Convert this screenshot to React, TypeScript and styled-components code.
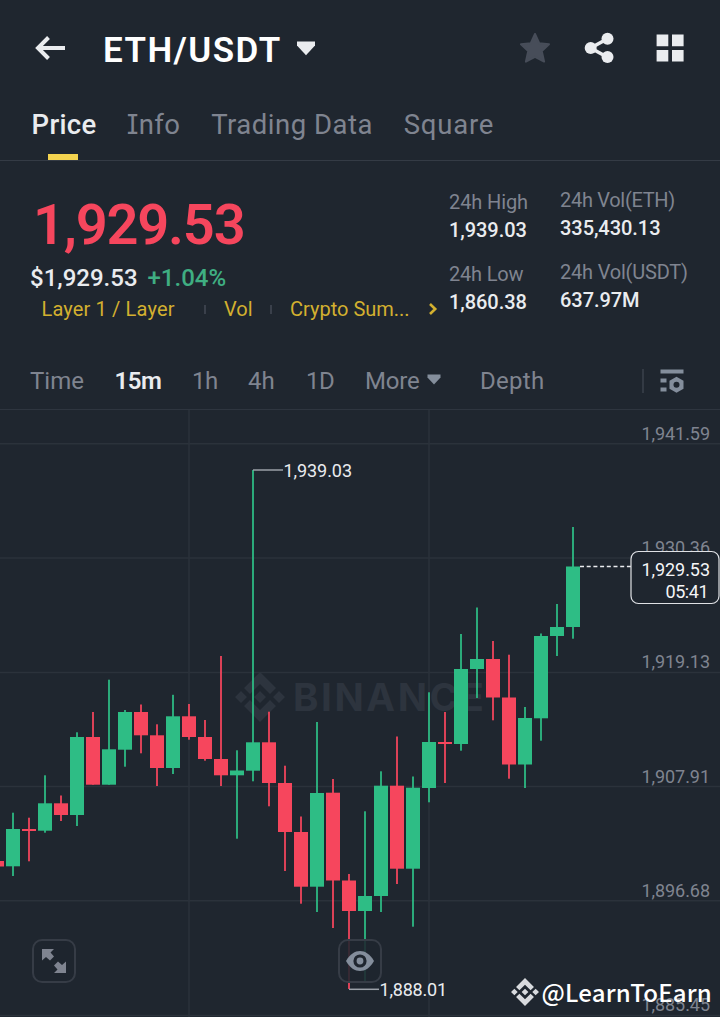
import React from "react";
import styled, { createGlobalStyle } from "styled-components";

const c = {
  bg: "#1f262f",
  line: "#2e353f",
  grid: "#2b323b",
  text: "#eaecef",
  muted: "#848e9c",
  dim: "#7f8490",
  up: "#2ebd85",
  down: "#f6465d",
  gold: "#d3b02f",
};

const Global = createGlobalStyle`
  * { box-sizing: border-box; }
  body { margin: 0; background: ${c.bg}; font-family: Roboto, "Liberation Sans", sans-serif; color: ${c.text}; }
`;

const Screen = styled.main`
  width: 720px;
  height: 1017px;
  overflow: hidden;
  display: flex;
  flex-direction: column;
  background: ${c.bg};
  white-space: nowrap;
`;

const Header = styled.header`
  height: 96px;
  flex: none;
  display: flex;
  align-items: center;
  padding: 0 34px 0 34px;
`;

const Title = styled.h1`
  margin: 0 0 0 37px;
  padding-top: 5px;
  width: 179px;
  font-size: 35px;
  line-height: 40px;
  font-weight: 600;
  letter-spacing: 1.4px;
  color: #fff;
`;

const HeaderCaret = styled.svg`
  margin-left: 14px;
`;

const Actions = styled.div`
  margin-left: auto;
  display: flex;
  align-items: center;
  gap: 34px;
`;

const Tabs = styled.nav`
  height: 65px;
  flex: none;
  display: flex;
  padding-left: 31px;
  gap: 30px;
  border-bottom: 1px solid #343b45;
`;

const Tab = styled.div<{ $active?: boolean; $w: number; $ls: number }>`
  width: ${(p) => p.$w}px;
  height: 64px;
  display: flex;
  flex-direction: column;
  align-items: center;
  justify-content: space-between;
  padding-top: 12px;
  font-size: 27.5px;
  line-height: 33px;
  text-indent: 2px;
  font-weight: ${(p) => (p.$active ? 500 : 400)};
  letter-spacing: ${(p) => p.$ls}px;
  color: ${(p) => (p.$active ? c.text : c.dim)};
  &::after {
    content: "";
    width: 30px;
    height: 6px;
    background: ${(p) => (p.$active ? "#f3d34f" : "transparent")};
  }
`;

const SlabI = styled.span`
  font-family: Inter, sans-serif;
  font-size: 26.5px;
  font-feature-settings: "cv08";
`;

const Summary = styled.section`
  height: 191px;
  flex: none;
  display: flex;
  padding-left: 30px;
`;

const PriceColumn = styled.div`
  width: 419px;
  padding-top: 35px;
`;

const Price = styled.div`
  padding-left: 3px;
  font-size: 56px;
  line-height: 58px;
  font-weight: 600;
  letter-spacing: -1.2px;
  color: ${c.down};
`;

const SubPrice = styled.div`
  display: flex;
  gap: 10px;
  margin-top: 10px;
  font-size: 24px;
  line-height: 28px;
  font-weight: 500;
`;

const Change = styled.span`
  color: #3fae82;
`;

const Tags = styled.div`
  display: flex;
  align-items: center;
  height: 34px;
  padding-left: 11.5px;
  font-size: 20px;
  color: ${c.gold};
`;

const Tag = styled.span<{ $w: number; $ls?: number }>`
  width: ${(p) => p.$w}px;
  letter-spacing: ${(p) => p.$ls ?? 0}px;
`;

const TagRule = styled.i<{ $l: number; $r: number }>`
  width: 2px;
  height: 9px;
  margin: 0 ${(p) => p.$r}px 0 ${(p) => p.$l}px;
  background: #3a404b;
`;

const TagArrow = styled.svg`
  margin-left: 17px;
`;

const StatColumn = styled.dl<{ $top: number; $w: number; $gap: number }>`
  width: ${(p) => p.$w}px;
  margin: 0;
  padding-top: ${(p) => p.$top}px;
  display: flex;
  flex-direction: column;
  gap: ${(p) => p.$gap}px;
`;

const Stat = styled.div`
  font-size: 20px;
  line-height: 28px;
`;

const StatLabel = styled.dt<{ $ls?: number }>`
  color: ${c.dim};
  letter-spacing: ${(p) => p.$ls ?? 0}px;
`;

const StatValue = styled.dd`
  margin: 0;
  font-weight: 500;
  letter-spacing: -0.05px;
  color: ${c.text};
`;

const Intervals = styled.nav`
  height: 58px;
  flex: none;
  display: flex;
  align-items: center;
  padding-left: 30px;
  border-bottom: 1px solid ${c.line};
`;

const Interval = styled.span<{ $w: number; $ls?: number; $active?: boolean }>`
  width: ${(p) => p.$w}px;
  font-size: 24px;
  line-height: 30px;
  letter-spacing: ${(p) => p.$ls ?? 0}px;
  font-weight: ${(p) => (p.$active ? 600 : 400)};
  color: ${(p) => (p.$active ? c.text : c.dim)};
`;

const SmallCaret = styled.svg`
  margin: -3px 39px 0 0;
`;

const Divider = styled.i`
  width: 2px;
  height: 24px;
  margin-right: 16px;
  background: #333a44;
`;

const ChartArea = styled.section`
  position: relative;
  height: 607px;
  flex: none;
`;

const ChartSvg = styled.svg`
  display: block;
`;

const ChartButton = styled.button<{ $x: number }>`
  position: absolute;
  left: ${(p) => p.$x}px;
  top: 529px;
  width: 44px;
  height: 44px;
  padding: 0;
  display: flex;
  align-items: center;
  justify-content: center;
  border: 2px solid #363c46;
  border-radius: 10px;
  background: rgba(31, 38, 47, 0.88);
`;

const Author = styled.div`
  position: absolute;
  right: 8px;
  top: 566px;
  display: flex;
  align-items: center;
  gap: 3px;
  font-family: "Noto Sans CJK SC", "Noto Sans", sans-serif;
  font-weight: 500;
  font-size: 24px;
  line-height: 32px;
  letter-spacing: 0.2px;
  color: #fff;
`;

type Candle = [x: number, top: number, bottom: number, high: number, low: number, up: 0 | 1];

const candles: Candle[] = [
  [-3, 861, 866.5, 861, 866.5, 0],
  [13, 829, 866.3, 812.7, 876, 1],
  [29, 829, 831, 817.7, 861.3, 0],
  [45, 803.3, 830.7, 775.3, 832.7, 1],
  [61, 803.3, 815, 795.5, 821, 0],
  [77, 737, 815, 732.3, 826, 1],
  [93, 737, 784.7, 712, 784.7, 0],
  [109, 749.3, 784.7, 679.7, 784.7, 1],
  [125, 712, 749.7, 710, 766.7, 1],
  [141, 712, 735.3, 704.5, 753.3, 0],
  [157, 735.3, 768, 724.3, 786, 0],
  [173, 716.3, 768, 694.8, 774, 1],
  [189, 716.3, 737, 704, 739.7, 0],
  [205, 737, 759, 720, 760.7, 0],
  [221, 759, 775.3, 656, 786, 0],
  [237, 770.5, 775.3, 750.3, 838.7, 1],
  [253, 742.3, 770.7, 470, 781.3, 1],
  [269, 742.3, 783, 711.7, 806.3, 0],
  [285, 783, 832, 765.7, 871, 0],
  [301, 832, 886.7, 816.5, 903.7, 0],
  [317, 793, 886.7, 722, 912, 1],
  [333, 792.7, 880.5, 779, 928, 0],
  [349, 880.5, 911, 874, 989, 0],
  [365, 896, 911, 811.3, 981, 1],
  [381, 785.7, 896, 771.3, 912, 1],
  [397, 785.7, 868.7, 736.5, 884, 0],
  [413, 787.7, 868.7, 776.5, 926.7, 1],
  [429, 742, 788, 692.3, 802.3, 1],
  [445, 742, 744, 712, 783, 0],
  [461, 669, 744, 634, 750.7, 1],
  [477, 659, 669, 607.5, 698, 1],
  [493, 659, 697.5, 641, 720.3, 0],
  [509, 697.5, 764.5, 654.7, 778.7, 0],
  [525, 718, 764.5, 707, 788, 1],
  [541, 636, 718.3, 633.5, 740.7, 1],
  [557, 627, 636, 604, 656, 1],
  [573, 566.5, 627, 527, 638.7, 1],
];

const gridY = [443.7, 558, 672.4, 786.6, 900.8, 1015.5];
const axis: [string, number][] = [
  ["1,941.59", 440],
  ["1,930.36", 553.5],
  ["1,919.13", 668],
  ["1,907.91", 782.7],
  ["1,896.68", 897],
  ["1,885.45", 1011],
];

/* Diamond brand mark in a 50 unit square */
const brandPath =
  "M25 0 L41 16 L35 22 L25 12 L15 22 L9 16 Z M25 50 L41 34 L35 28 L25 38 L15 28 L9 34 Z M0 25 L6 19 L12 25 L6 31 Z M38 25 L44 19 L50 25 L44 31 Z M19 25 L25 19 L31 25 L25 31 Z";

function Chart() {
  return (
    <ChartSvg width="720" height="607" viewBox="0 410 720 607" fontFamily="Roboto, sans-serif" fontSize="18">
      <g stroke={c.grid} strokeWidth="1.5">
        {gridY.map((y) => (
          <line key={y} x1="0" x2="720" y1={y} y2={y} />
        ))}
        <line x1="189" x2="189" y1="410" y2="1017" />
        <line x1="429" x2="429" y1="410" y2="1017" />
      </g>
      <g fill="#2d343e">
        <path d={brandPath} transform="translate(235 672)" />
        <text x="293" y="711" fontFamily="Inter, sans-serif" fontWeight="700" fontSize="38.5" textLength="191">
          BINANCE
        </text>
      </g>
      {candles.map(([x, top, bottom, high, low, up]) => (
        <g key={x} fill={up ? c.up : c.down}>
          <rect x={x - 1} y={high} width="2" height={low - high} opacity="0.88" />
          <rect x={x - 7} y={top} width="14" height={bottom - top} />
        </g>
      ))}
      <g stroke="#9ba0a8" strokeWidth="1.5" fill="none">
        <path d="M253 470H283" />
        <path d="M349 989.3H379" />
      </g>
      <g fill={c.text}>
        <text x="283.5" y="477" textLength="68.5">1,939.03</text>
        <text x="379.5" y="996" textLength="67.5">1,888.01</text>
      </g>
      <g fill={c.dim}>
        {axis.map(([label, y]) => (
          <text key={label} x="641.5" y={y} textLength="68.5">
            {label}
          </text>
        ))}
      </g>
      <path d="M580 566.5H631" stroke={c.text} strokeWidth="1.3" strokeDasharray="4 2.7" />
      <rect x="631" y="551.5" width="88" height="52" rx="7.5" fill={c.bg} stroke="#dfe1e5" strokeWidth="1.2" />
      <g fill="#f4f5f7">
        <text x="641.5" y="576.3" textLength="68.5">1,929.53</text>
        <text x="665.5" y="598" textLength="43">05:41</text>
      </g>
    </ChartSvg>
  );
}

export default function App() {
  return (
    <Screen>
      <Global />
      <Header>
        <svg width="32" height="26" viewBox="0 0 32 26" fill="none" stroke={c.text} strokeWidth="4">
          <path d="M31 13H4M14.5 2.5L4 13l10.5 10.5" />
        </svg>
        <Title>ETH/USDT</Title>
        <HeaderCaret width="20" height="15" viewBox="0 0 20 15" fill={c.text}>
          <path d="M1 0.5H19V4.5L10 14.3L1 4.5Z" />
        </HeaderCaret>
        <Actions>
          <svg width="30" height="30" viewBox="0 0 30 30" fill="#474d59" stroke="#474d59" strokeWidth="2" strokeLinejoin="round">
            <path d="M15 1L19.2 10.2L29 11.2L21.8 18.1L24.1 28.6L15 23.8L5.9 28.6L8.2 18.1L1 11.2L10.8 10.2Z" />
          </svg>
          <svg width="30" height="32" viewBox="0 0 30 32" fill={c.text} stroke={c.text}>
            <path d="M23.5 6.7L6.7 16L23.5 25.3" fill="none" strokeWidth="3.6" />
            <circle cx="6.7" cy="16" r="6" stroke="none" />
            <circle cx="23.5" cy="6.8" r="6" stroke="none" />
            <circle cx="23.5" cy="25" r="6" stroke="none" />
          </svg>
          <svg width="38" height="28" viewBox="0 0 38 28" fill={c.text}>
            <path d="M8.6 0.6H20.3V12.2H8.6ZM24 0.6H35.6V12.2H24ZM8.6 16H20.3V27.6H8.6ZM24 16H35.6V27.6H24Z" />
          </svg>
        </Actions>
      </Header>
      <Tabs>
        <Tab $active $w={64} $ls={0.3}>Price</Tab>
        <Tab $w={55} $ls={0.4}>
          <span>
            <SlabI>I</SlabI>nfo
          </span>
        </Tab>
        <Tab $w={162} $ls={0.5}>Trading Data</Tab>
        <Tab $w={92} $ls={0.8}>Square</Tab>
      </Tabs>
      <Summary>
        <PriceColumn>
          <Price>1,929.53</Price>
          <SubPrice>
            <span>$1,929.53</span>
            <Change>+1.04%</Change>
          </SubPrice>
          <Tags>
            <Tag $w={133.5} $ls={0.15}>Layer 1 / Layer</Tag>
            <TagRule $l={29} $r={18} />
            <Tag $w={28}>Vol</Tag>
            <TagRule $l={18} $r={18} />
            <Tag $w={121}>Crypto Sum...</Tag>
            <TagArrow width="10" height="14" viewBox="0 0 10 14" fill="none" stroke={c.gold} strokeWidth="2.6">
              <path d="M2 2L7.2 7L2 12" />
            </TagArrow>
          </Tags>
        </PriceColumn>
        <StatColumn $top={27} $w={111} $gap={16}>
          <Stat>
            <StatLabel $ls={-0.1}>24h High</StatLabel>
            <StatValue>1,939.03</StatValue>
          </Stat>
          <Stat>
            <StatLabel $ls={-0.2}>24h Low</StatLabel>
            <StatValue>1,860.38</StatValue>
          </Stat>
        </StatColumn>
        <StatColumn $top={25} $w={160} $gap={16}>
          <Stat>
            <StatLabel $ls={-0.3}>24h Vol(ETH)</StatLabel>
            <StatValue>335,430.13</StatValue>
          </Stat>
          <Stat>
            <StatLabel $ls={-0.2}>24h Vol(USDT)</StatLabel>
            <StatValue>637.97M</StatValue>
          </Stat>
        </StatColumn>
      </Summary>
      <Intervals>
        <Interval $w={84.5}>Time</Interval>
        <Interval $w={77.5} $ls={-0.4} $active>15m</Interval>
        <Interval $w={56} $ls={-0.5}>1h</Interval>
        <Interval $w={58}>4h</Interval>
        <Interval $w={59} $ls={-0.6}>1D</Interval>
        <Interval $w={62} $ls={-0.2}>More</Interval>
        <SmallCaret width="14" height="11" viewBox="0 0 14 11" fill={c.muted}>
          <path d="M0.5 0.5H13.5V3.5L7 10.5L0.5 3.5Z" />
        </SmallCaret>
        <Interval $w={162} $ls={0.3}>Depth</Interval>
        <Divider />
        <svg width="26" height="26" viewBox="0 0 26 26" fill={c.muted}>
          <path d="M0.5 1.5H23.5V5.5H0.5ZM0.5 10.5H6.5V14.5H0.5ZM0.5 19.5H6.5V23.5H0.5Z" />
          <path fillRule="evenodd" d="M16.5 8.8L23.5 12.8V20.8L16.5 24.8L9.5 20.8V12.8ZM16.5 13.8A3 3 0 1 0 16.5 19.8A3 3 0 1 0 16.5 13.8Z" />
        </svg>
      </Intervals>
      <ChartArea>
        <Chart />
        <ChartButton $x={32} aria-label="Expand">
          <svg width="26" height="26" viewBox="0 0 26 26" fill={c.dim}>
            <path d="M1 1H13L9.5 4.5L13 8.5L9 12.5L5 9L1 12.5Z" />
            <path d="M25 25H13L16.5 21.5L13 17.5L17 13.5L21 17L25 13.5Z" />
          </svg>
        </ChartButton>
        <ChartButton $x={338} aria-label="Show indicators">
          <svg width="30" height="22" viewBox="0 0 30 22">
            <path d="M1 11C5 4 10 1 15 1S25 4 29 11C25 18 20 21 15 21S5 18 1 11Z" fill={c.muted} />
            <circle cx="15" cy="11" r="5" fill={c.muted} stroke={c.bg} strokeWidth="3.2" />
          </svg>
        </ChartButton>
        <Author>
          <svg width="28" height="28" viewBox="0 0 50 50" fill="#d8dade">
            <path d={brandPath} />
          </svg>
          @LearnToEarn
        </Author>
      </ChartArea>
    </Screen>
  );
}
